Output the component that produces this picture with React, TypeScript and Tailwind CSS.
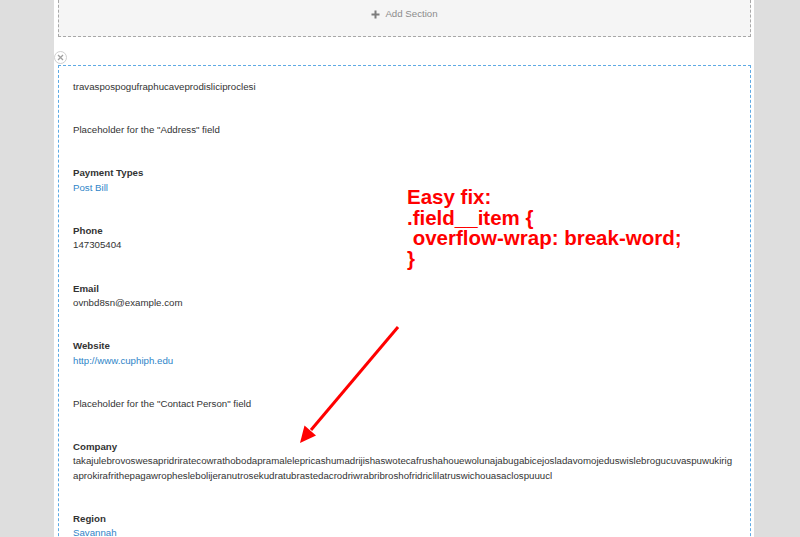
const fields: { label?: string; lines: string[]; link?: boolean }[] = [
  { lines: ['travaspospogufraphucaveprodisliciproclesi'] },
  { lines: ['Placeholder for the "Address" field'] },
  { label: 'Payment Types', lines: ['Post Bill'], link: true },
  { label: 'Phone', lines: ['147305404'] },
  { label: 'Email', lines: ['ovnbd8sn@example.com'] },
  { label: 'Website', lines: ['http://www.cuphiph.edu'], link: true },
  { lines: ['Placeholder for the "Contact Person" field'] },
  {
    label: 'Company',
    lines: [
      'takajulebrovoswesapridriratecowrathobodapramalelepricashumadrijishaswotecafrushahouewolunajabugabicejosladavomojeduswislebrogucuvaspuwukirig',
      'aprokirafrithepagawropheslebolijeranutrosekudratubrastedacrodriwrabribroshofridriclilatruswichouasaclospuuucl',
    ],
  },
  { label: 'Region', lines: ['Savannah'], link: true },
]

export default function App() {
  return (
    <div className="relative flex h-[537px] w-[800px] overflow-hidden bg-[#dedede] font-['Liberation_Sans',Arial,sans-serif]">
      <div className="w-[54px] flex-shrink-0" />

      <div className="w-[700px] flex-shrink-0 bg-white pl-[4px] pr-[3px]">
        {/* Add section box */}
        <div className="flex h-[37px] items-center justify-center gap-[5px] border border-t-0 border-dashed border-[#a8a8a8] bg-[#f5f5f5] pb-[8px] text-[9.7px] text-[#8c8c8c]">
          <svg width="9" height="9" viewBox="0 0 9 9" className="mt-[1px]">
            <path d="M4.5 0.5v8M0.5 4.5h8" stroke="#7d7d7d" strokeWidth="2" />
          </svg>
          <span>Add Section</span>
        </div>

        {/* Section with fields */}
        <div className="relative mt-[28px] border border-dashed border-[#5eaae4] pl-[14px] pr-[10px] pt-[14px] text-[9.7px] leading-[14.4px] text-[#333]">
          <div className="absolute -left-[5px] -top-[15px] flex h-[13px] w-[13px] items-center justify-center rounded-full border border-[#cfcfcf] bg-white">
            <svg width="7" height="7" viewBox="0 0 7 7">
              <path d="M1 1l5 5M6 1l-5 5" stroke="#a0a0a0" strokeWidth="1.3" />
            </svg>
          </div>

          {fields.map((f, i) => (
            <div key={i} className="mb-[28.8px]">
              {f.label && <div className="font-bold">{f.label}</div>}
              {f.lines.map((l, j) => (
                <div key={j} className={`whitespace-nowrap ${f.link ? 'text-[#2f85c8]' : ''}`}>
                  {l}
                </div>
              ))}
            </div>
          ))}
        </div>
      </div>

      <div className="flex-1" />

      {/* Annotation */}
      <div className="absolute left-[407px] top-[187px] whitespace-pre text-[20.5px] font-bold leading-[20.5px] text-[#ff0000]">
        <div>Easy fix:</div>
        <div>.field__item {'{'}</div>
        <div> overflow-wrap: break-word;</div>
        <div>{'}'}</div>
      </div>
      <svg className="absolute left-0 top-0" width="800" height="537" viewBox="0 0 800 537">
        <line x1="398" y1="327" x2="311" y2="430" stroke="#ff0000" strokeWidth="3" />
        <polygon points="300,443 304.5,425.5 316,435.5" fill="#ff0000" />
      </svg>
    </div>
  )
}
